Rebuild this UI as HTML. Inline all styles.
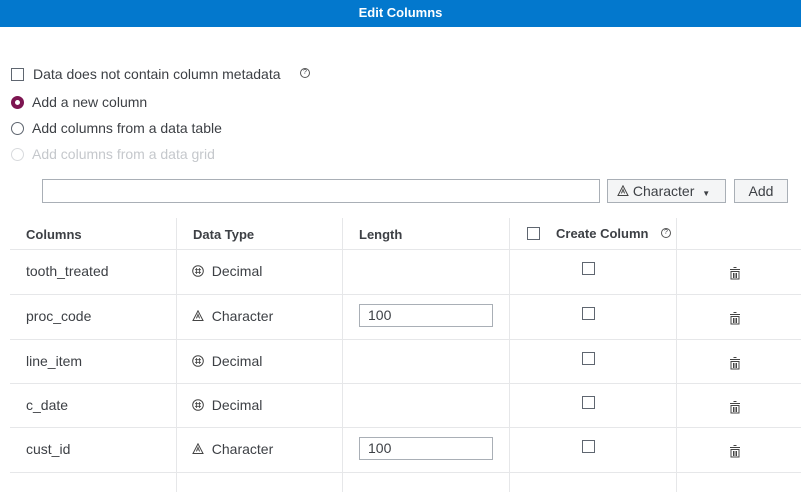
<!DOCTYPE html>
<html><head><meta charset="utf-8"><style>
*{margin:0;padding:0;box-sizing:border-box}
body{width:801px;height:492px;overflow:hidden;background:#fff;font-family:"Liberation Sans",sans-serif;font-size:14px;color:#3d4045;position:relative}
.hdr{position:absolute;left:0;top:0;width:801px;height:27px;background:#0378cd;color:#fff;font-weight:bold;font-size:13px;text-align:center;line-height:26px}
.a{position:absolute;white-space:nowrap}
.b{font-weight:bold;font-size:13px}
.cb{position:absolute;width:13px;height:13px;border:1px solid #5f6670;background:#fff}
.rb{position:absolute;width:13px;height:13px;border:1px solid #5f6670;border-radius:50%}
.hl{position:absolute;left:10px;width:791px;height:1px;background:#e6e7e9}
.vl{position:absolute;top:218px;height:274px;width:1px;background:#e6e7e9}
.inp{position:absolute;border:1px solid #a9afb6;background:#fff;height:24px}
.q{position:absolute;width:10px;height:10px;border:1px solid #555;border-radius:50%;font-size:7px;line-height:8px;text-align:center}
</style></head><body>
<div class="hdr">Edit Columns</div>
<div class="cb" style="left:11px;top:68px"></div>
<div class="a" style="left:33px;top:66px">Data does not contain column metadata</div>
<div class="q" style="left:300px;top:68px">?</div>
<div class="rb" style="left:11px;top:96px;border:4px solid #7d1551"></div>
<div class="a" style="left:32px;top:94px">Add a new column</div>
<div class="rb" style="left:11px;top:122px"></div>
<div class="a" style="left:32px;top:120px">Add columns from a data table</div>
<div class="rb" style="left:11px;top:148px;border-color:#d8dadd"></div>
<div class="a" style="left:32px;top:146px;color:#c5c8cc">Add columns from a data grid</div>
<div class="inp" style="left:42px;top:179px;width:558px"></div>
<div class="inp" style="left:607px;top:179px;width:119px;background:#f4f5f6;padding-left:9px;line-height:22px"><svg width="12" height="12" viewBox="0 0 12 12" style="vertical-align:-1px" fill="none" stroke="#444" stroke-width="1"><path d="M6 .8L11 10.5H1z"/><path d="M4.3 8.5L6 4.2 7.7 8.5M4.9 7h2.2" stroke-width=".8"/></svg> Character <span style="font-size:8px;margin-left:4px">&#9660;</span></div>
<div class="inp" style="left:734px;top:179px;width:54px;background:#f4f5f6;text-align:center;line-height:22px">Add</div>

<div class="a b" style="left:26px;top:227px">Columns</div>
<div class="a b" style="left:193px;top:227px">Data Type</div>
<div class="a b" style="left:359px;top:227px">Length</div>
<div class="cb" style="left:527px;top:227px"></div>
<div class="a b" style="left:556px;top:226px">Create Column</div>
<div class="q" style="left:661px;top:228px">?</div>

<div class="hl" style="top:249px"></div>
<div class="hl" style="top:294px"></div>
<div class="hl" style="top:339px"></div>
<div class="hl" style="top:383px"></div>
<div class="hl" style="top:427px"></div>
<div class="hl" style="top:472px"></div>
<div class="vl" style="left:176px"></div>
<div class="vl" style="left:342px"></div>
<div class="vl" style="left:509px"></div>
<div class="vl" style="left:676px"></div>

<div id="rows"></div>
<script>
var r=[["tooth_treated",0],["proc_code",1],["line_item",0],["c_date",0],["cust_id",1]];
var tops=[249,294,339,383,427],h="";
var dec='<svg width="12" height="12" viewBox="0 0 12 12" style="vertical-align:-1px" fill="none" stroke="#444" stroke-width="1"><circle cx="6" cy="6" r="5.3"/><path d="M4.6 3v6M7.4 3v6M3 4.7h6M3 7.3h6" stroke-width=".8"/></svg>';
var chr='<svg width="12" height="12" viewBox="0 0 12 12" style="vertical-align:-1px" fill="none" stroke="#444" stroke-width="1"><path d="M6 .8L11 10.5H1z"/><path d="M4.3 8.5L6 4.2 7.7 8.5M4.9 7h2.2" stroke-width=".8"/></svg>';
r.forEach(function(x,i){var t=tops[i];var c=t+22;
h+='<div class="a" style="left:26px;top:'+(c-8)+'px">'+x[0]+'</div>';
h+='<div class="a" style="left:192px;top:'+(c-8)+'px">'+(x[1]?chr:dec)+'&nbsp; '+(x[1]?'Character':'Decimal')+'</div>';
if(x[1])h+='<div class="inp" style="left:359px;top:'+(c-12)+'px;width:134px;height:23px;padding-left:8px;line-height:21px">100</div>';
h+='<div class="cb" style="left:582px;top:'+(c-9)+'px"></div>';
h+='<svg class="a" style="left:729px;top:'+(c-5)+'px" width="12" height="14" viewBox="0 0 12 14" fill="none" stroke="#444" stroke-width="1"><path d="M4.5 1.5h3M1 3.5h10M2 5.5h8v7.5H2z M4.5 7v5M6 7v5M7.5 7v5"/></svg>';
});
document.getElementById("rows").innerHTML=h;
</script>
</body></html>
